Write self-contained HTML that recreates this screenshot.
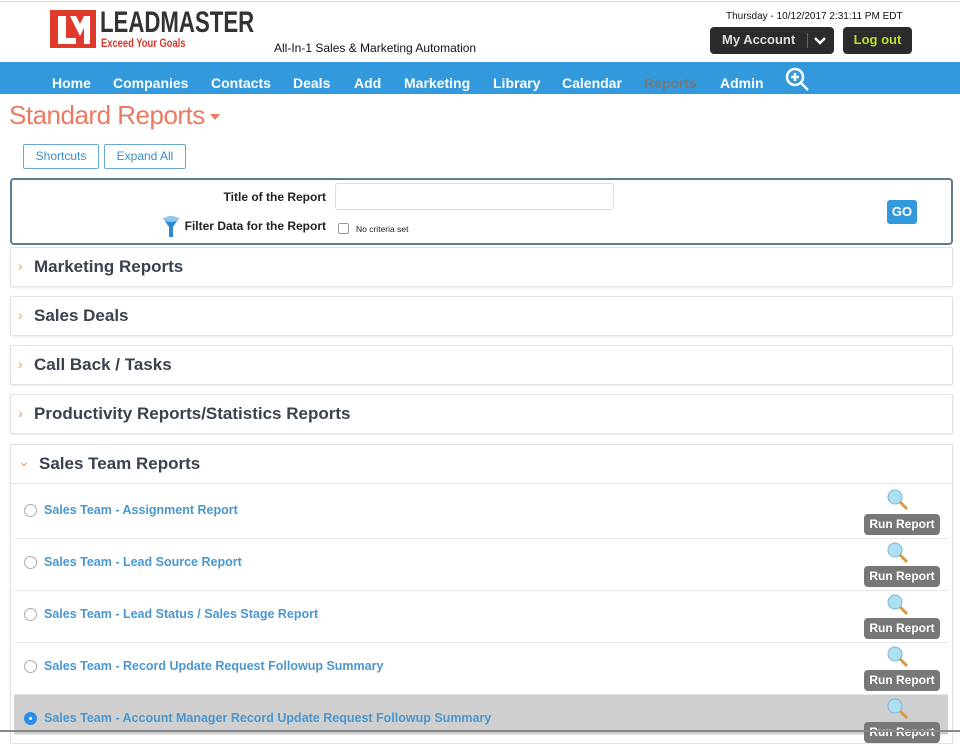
<!DOCTYPE html>
<html><head><meta charset="utf-8"><style>
*{margin:0;padding:0;box-sizing:border-box}
body{width:960px;height:732px;overflow:hidden;background:#fff;font-family:"Liberation Sans",sans-serif;position:relative}
.a{position:absolute}
.nav{top:62px;left:0;width:960px;height:32px;background:#3399dd}
.nav span{position:absolute;top:13px;font-weight:bold;font-size:14px;color:#fff}
.sec{left:10px;width:943px;height:40px;border:1px solid #e2e2e2;border-radius:2px;box-shadow:0 1px 2px rgba(0,0,0,.08);background:#fff}
.sec .c{position:absolute;left:7px;top:10px;color:#e8a060;font-size:14px}
.sec .t{position:absolute;left:23px;top:9px;font-size:17px;font-weight:bold;color:#3a4250}
.row{left:14px;width:934px;border-bottom:1px solid #e6e6e6}
.row .r{position:absolute;left:10px;width:13px;height:13px;border:1px solid #aaa;border-radius:50%;background:#fff}
.row .l{position:absolute;left:30px;font-size:12.5px;font-weight:bold;color:#4a97d0}
.run{position:absolute;width:76px;height:21px;background:#777;border-radius:4px;color:#fff;font-size:12px;font-weight:bold;text-align:center;line-height:21px}
</style></head><body>
<div class="a" style="top:1px;left:0;width:960px;height:1px;background:#ddd"></div>
<svg class="a" style="left:50px;top:10px" width="46" height="38"><rect width="46" height="38" fill="#e03a2c"/><path d="M8 6h8v22h10v6H8zM20 6h6l4 8 4-8h6v28h-6V18l-4 8-4-8z" fill="#fff"/></svg>
<div class="a" style="left:100px;top:6px;font-size:30px;font-weight:bold;color:#333;transform:scaleX(.74);transform-origin:left">LEADMASTER</div>
<div class="a" style="left:101px;top:36px;font-size:12px;font-weight:bold;color:#d8372a;transform:scaleX(.78);transform-origin:left">Exceed Your Goals</div>
<div class="a" style="left:274px;top:41px;font-size:12px;color:#111">All-In-1 Sales &amp; Marketing Automation</div>
<div class="a" style="left:726px;top:11px;font-size:10px;color:#111">Thursday - 10/12/2017 2:31:11 PM EDT</div>
<div class="a" style="left:710px;top:27px;width:124px;height:27px;background:#2b2b2b;border-radius:4px;color:#ddd;font-weight:bold;font-size:13px;line-height:26px;padding-left:12px">My Account<span style="position:absolute;left:97px;top:6px;width:1px;height:15px;background:#666"></span><svg style="position:absolute;left:104px;top:9px" width="12" height="9"><path d="M1 2l5 5 5-5" fill="none" stroke="#fff" stroke-width="2.5"/></svg></div>
<div class="a" style="left:843px;top:27px;width:69px;height:27px;background:#2b2b2b;border-radius:4px;color:#b8e02a;font-weight:bold;font-size:13px;line-height:26px;text-align:center">Log out</div>
<div class="a nav">
<span style="left:52px">Home</span><span style="left:113px">Companies</span><span style="left:211px">Contacts</span><span style="left:293px">Deals</span><span style="left:354px">Add</span><span style="left:404px">Marketing</span><span style="left:493px">Library</span><span style="left:562px">Calendar</span><span style="left:644px;color:#777">Reports</span><span style="left:720px">Admin</span>
<svg style="position:absolute;left:785px;top:5px" width="26" height="26"><circle cx="10" cy="10" r="8" fill="none" stroke="#fff" stroke-width="2.5"/><path d="M10 6v8M6 10h8M16 16l7 7" stroke="#fff" stroke-width="2.5"/></svg>
</div>
<div class="a" style="left:9px;top:100px;font-size:26px;color:#ec7a60;letter-spacing:-.5px">Standard Reports</div>
<div class="a" style="left:210px;top:114px;border:5px solid transparent;border-top:6px solid #ec7a60"></div>
<div class="a" style="left:23px;top:144px;width:76px;height:25px;border:1px solid #6aa9d4;border-radius:2px;color:#3f8bc8;font-size:12px;text-align:center;line-height:23px">Shortcuts</div>
<div class="a" style="left:104px;top:144px;width:82px;height:25px;border:1px solid #6aa9d4;border-radius:2px;color:#3f8bc8;font-size:12px;text-align:center;line-height:23px">Expand All</div>
<div class="a" style="left:10px;top:178px;width:943px;height:67px;border:2px solid #5c7b96;border-radius:4px">
<div class="a" style="right:625px;top:10px;font-size:12px;font-weight:bold;color:#222">Title of the Report</div>
<div class="a" style="left:323px;top:3px;width:279px;height:27px;border:1px solid #ddd;border-radius:3px"></div>
<svg class="a" style="left:150px;top:35px" width="18" height="24"><path d="M1 3h16l-6 9v10h-4V12z" fill="#2a8ad8"/><ellipse cx="9" cy="4" rx="7" ry="3" fill="#8cc8ef"/></svg>
<div class="a" style="right:625px;top:39px;font-size:12px;font-weight:bold;color:#222">Filter Data for the Report</div>
<div class="a" style="left:326px;top:43px;width:11px;height:11px;border:1px solid #999;border-radius:2px"></div>
<div class="a" style="left:344px;top:44px;font-size:8.5px;color:#222">No criteria set</div>
<div class="a" style="left:875px;top:20px;width:30px;height:24px;background:#3399dd;border-radius:3px;color:#fff;font-weight:bold;font-size:13px;text-align:center;line-height:24px">GO</div>
</div>
<div class="a sec" style="top:247px"><span class="c">›</span><span class="t">Marketing Reports</span></div>
<div class="a sec" style="top:296px"><span class="c">›</span><span class="t">Sales Deals</span></div>
<div class="a sec" style="top:345px"><span class="c">›</span><span class="t">Call Back / Tasks</span></div>
<div class="a sec" style="top:394px"><span class="c">›</span><span class="t">Productivity Reports/Statistics Reports</span></div>
<div class="a sec" style="top:444px;height:300px"><span class="c" style="top:8px">&#8964;</span><span class="t" style="left:28px">Sales Team Reports</span><div class="a" style="left:0;top:38px;width:941px;height:1px;background:#e6e6e6"></div></div>
<div class="a row" style="top:483px;height:56px"><span class="r" style="top:21px"></span><span class="l" style="top:20px">Sales Team - Assignment Report</span></div>
<div class="a row" style="top:539px;height:52px"><span class="r" style="top:17px"></span><span class="l" style="top:16px">Sales Team - Lead Source Report</span></div>
<div class="a row" style="top:591px;height:52px"><span class="r" style="top:17px"></span><span class="l" style="top:16px">Sales Team - Lead Status / Sales Stage Report</span></div>
<div class="a row" style="top:643px;height:52px"><span class="r" style="top:17px"></span><span class="l" style="top:16px">Sales Team - Record Update Request Followup Summary</span></div>
<div class="a row" style="top:695px;height:40px;background:#cfcfcf"><span class="r" style="top:17px;background:#2e8be8;border-color:#2e8be8"><span style="position:absolute;left:4px;top:4px;width:3px;height:3px;background:#fff;border-radius:50%"></span></span><span class="l" style="top:16px">Sales Team - Account Manager Record Update Request Followup Summary</span></div>
<svg class="a" style="left:886px;top:488px" width="24" height="24"><circle cx="9" cy="9" r="7" fill="#aee0f4" stroke="#7ab7cf"/><path d="M14 14l7 7" stroke="#d89a40" stroke-width="3"/></svg>
<div class="a run" style="left:864px;top:514px">Run Report</div>
<svg class="a" style="left:886px;top:541px" width="24" height="24"><circle cx="9" cy="9" r="7" fill="#aee0f4" stroke="#7ab7cf"/><path d="M14 14l7 7" stroke="#d89a40" stroke-width="3"/></svg>
<div class="a run" style="left:864px;top:566px">Run Report</div>
<svg class="a" style="left:886px;top:593px" width="24" height="24"><circle cx="9" cy="9" r="7" fill="#aee0f4" stroke="#7ab7cf"/><path d="M14 14l7 7" stroke="#d89a40" stroke-width="3"/></svg>
<div class="a run" style="left:864px;top:618px">Run Report</div>
<svg class="a" style="left:886px;top:645px" width="24" height="24"><circle cx="9" cy="9" r="7" fill="#aee0f4" stroke="#7ab7cf"/><path d="M14 14l7 7" stroke="#d89a40" stroke-width="3"/></svg>
<div class="a run" style="left:864px;top:670px">Run Report</div>
<svg class="a" style="left:886px;top:697px" width="24" height="24"><circle cx="9" cy="9" r="7" fill="#aee0f4" stroke="#7ab7cf"/><path d="M14 14l7 7" stroke="#d89a40" stroke-width="3"/></svg>
<div class="a run" style="left:864px;top:722px">Run Report</div>
<div class="a" style="left:0;top:730px;width:960px;height:2px;background:#888"></div>
</body></html>
